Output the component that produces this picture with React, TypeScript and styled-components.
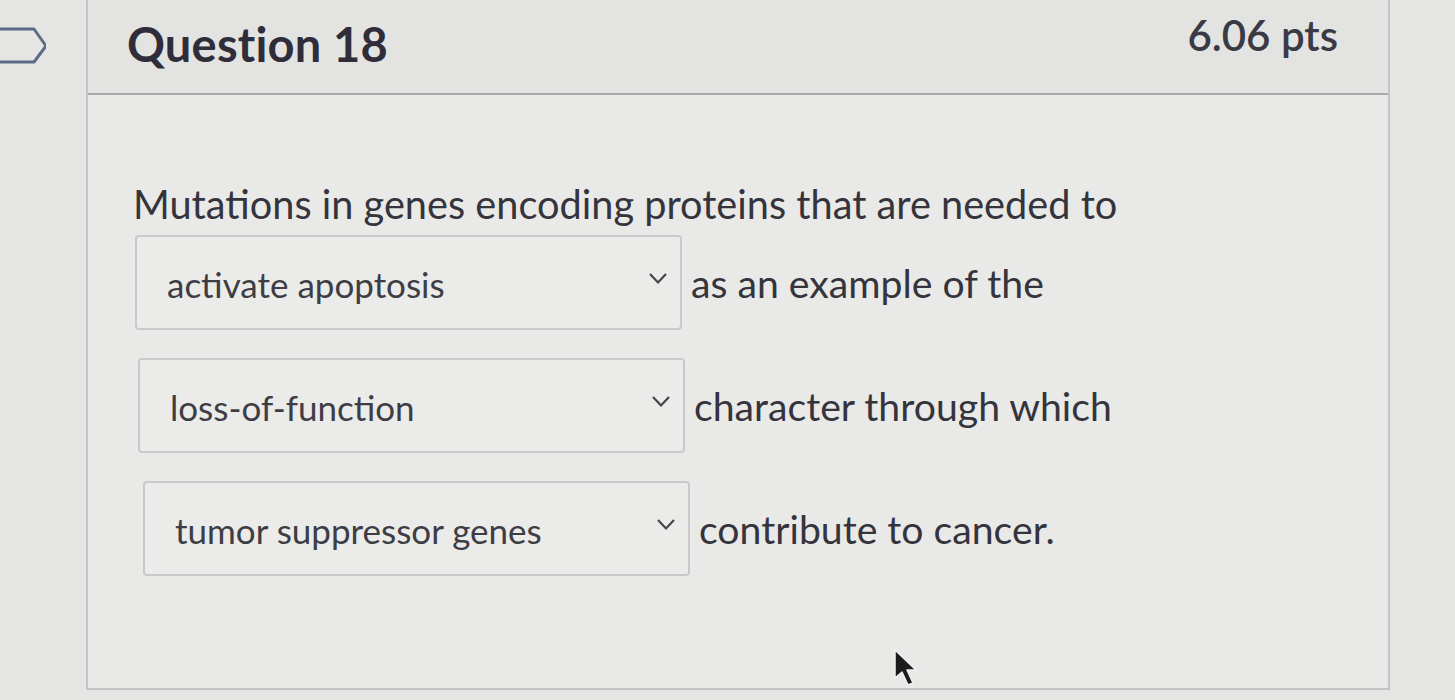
import React from 'react';
import styled, { createGlobalStyle } from 'styled-components';

const GlobalStyle = createGlobalStyle`
  html, body {
    margin: 0;
    padding: 0;
    background: #e5e5e3;
    font-family: Lato, "Open Sans", "Liberation Sans", sans-serif;
    color: #35353a;
    overflow: hidden;
  }
`;

const Page = styled.div`
  position: relative;
  display: flex;
  width: 1455px;
  height: 700px;
`;

const Gutter = styled.div`
  width: 86px;
  flex-shrink: 0;
  padding-top: 26px;
  box-sizing: border-box;
`;

const Card = styled.div`
  width: 1304px;
  height: 690px;
  flex-shrink: 0;
  box-sizing: border-box;
  border: 2px solid #c4c4c4;
  border-top: none;
  background: #e9e9e7;
  display: flex;
  flex-direction: column;
`;

const Header = styled.div`
  height: 95px;
  box-sizing: border-box;
  display: flex;
  align-items: flex-start;
  justify-content: space-between;
  padding: 16px 50px 0 39px;
  background: #e3e3e1;
  border-bottom: 2px solid #a9a9a9;
`;

const Title = styled.h2`
  margin: 0;
  font-size: 47px;
  font-weight: 700;
  color: #2f2d3a;
  letter-spacing: 0.2px;
`;

const Points = styled.div`
  font-size: 42px;
  font-weight: 600;
  color: #3a3a44;
  margin-top: -6px;
`;

const Body = styled.div`
  padding: 86px 48px 0 45px;
  display: flex;
  flex-direction: column;
`;

const Sentence = styled.p`
  margin: 0 0 8px;
  font-size: 39.7px;
  line-height: 46px;
  color: #35343c;
`;

const Row = styled.div<{ $shift: number }>`
  display: flex;
  align-items: center;
  gap: 9px;
  margin: 0 0 28px ${p => p.$shift}px;
`;

const Select = styled.div`
  width: 547px;
  height: 95px;
  box-sizing: border-box;
  border: 2px solid #c9c9c9;
  border-radius: 4px;
  background: #ebebe9;
  display: flex;
  align-items: center;
  justify-content: space-between;
  padding: 6px 12px 0 30px;
`;

const SelectText = styled.span`
  font-size: 35px;
  color: #3e3d45;
  margin-top: -4px;
`;

const Chevron = styled.svg`
  width: 20px;
  height: 13px;
  margin-top: -14px;
`;

const After = styled.span`
  font-size: 39.2px;
  color: #35343c;
`;

const Cursor = styled.svg`
  position: absolute;
  left: 893px;
  top: 648px;
  width: 26px;
  height: 40px;
`;

const rows = [
  { value: 'activate apoptosis', after: 'as an example of the', shift: 2 },
  { value: 'loss-of-function', after: 'character through which', shift: 5 },
  { value: 'tumor suppressor genes', after: 'contribute to cancer.', shift: 10 },
];

export default function App() {
  return (
    <>
      <GlobalStyle />
      <Page>
        <Gutter>
          <svg width="60" height="40" viewBox="0 0 60 40" style={{ marginLeft: -14 }}>
            <path d="M2 3 H48 L60 20 L48 36 H2 Z" fill="none" stroke="#5d6b86" strokeWidth="3" strokeLinejoin="round" />
          </svg>
        </Gutter>
        <Card>
          <Header>
            <Title>Question 18</Title>
            <Points>6.06 pts</Points>
          </Header>
          <Body>
            <Sentence>Mutations in genes encoding proteins that are needed to</Sentence>
            {rows.map(r => (
              <Row key={r.value} $shift={r.shift}>
                <Select>
                  <SelectText>{r.value}</SelectText>
                  <Chevron viewBox="0 0 20 13">
                    <path d="M2 2 L10 10.5 L18 2" fill="none" stroke="#45444c" strokeWidth="2.2" />
                  </Chevron>
                </Select>
                <After>{r.after}</After>
              </Row>
            ))}
          </Body>
        </Card>
        <Cursor viewBox="0 0 26 40">
          <path d="M2 2 L2 30 L9 24 L15 37 L20 35 L14 22 L23 22 Z" fill="#1c1c1e" stroke="#f2f2f2" strokeWidth="1.5" strokeLinejoin="round" />
        </Cursor>
      </Page>
    </>
  );
}
